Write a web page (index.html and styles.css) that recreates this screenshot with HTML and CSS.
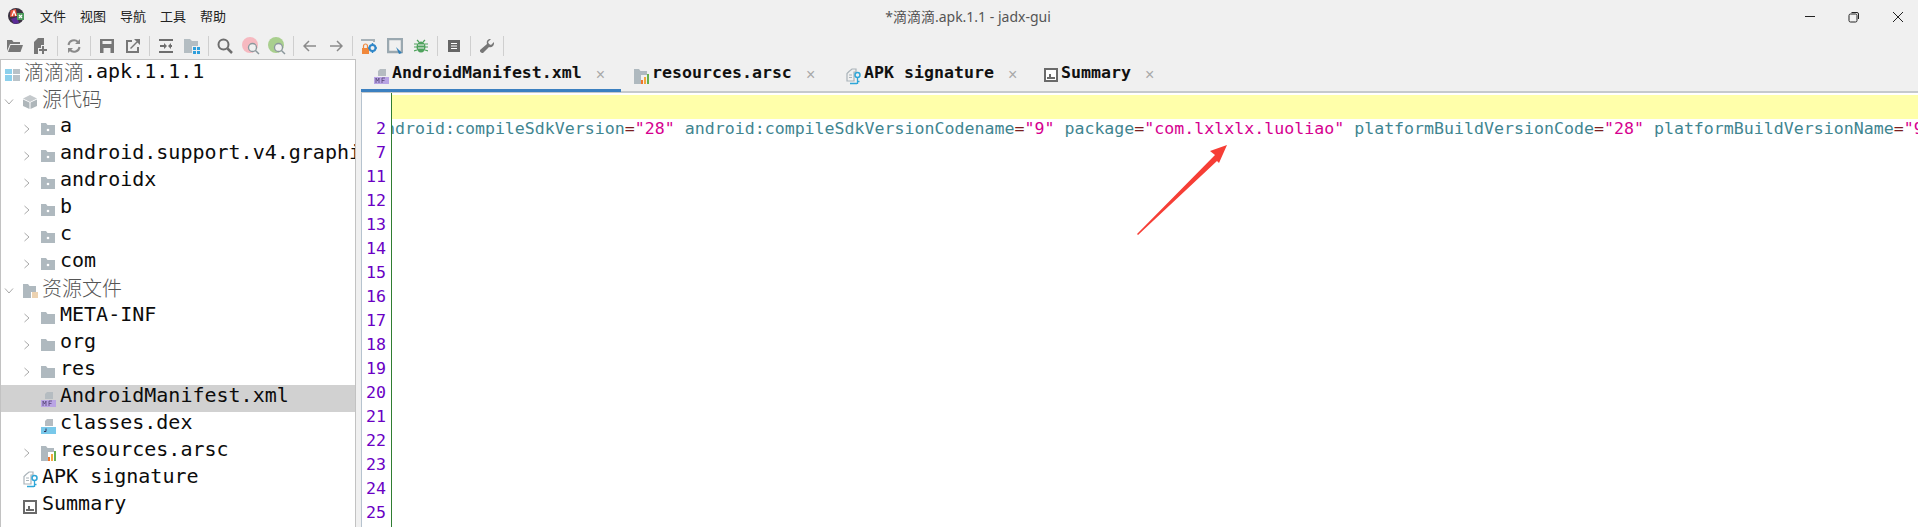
FILE: index.html
```html
<!DOCTYPE html>
<html lang="zh">
<head>
<meta charset="utf-8">
<title>jadx-gui</title>
<link rel="stylesheet" href="styles.css">
</head>
<body>
<svg class="defs" width="0" height="0">
  <symbol id="chev-r" viewBox="0 0 8 10"><path d="M1.5 1l4.500 4-4.500 4" fill="none" stroke="#a9a9a9" stroke-width="1"/></symbol>
  <symbol id="chev-d" viewBox="0 0 10 8"><path d="M1 1.500l4 4.500 4-4.500" fill="none" stroke="#a9a9a9" stroke-width="1"/></symbol>
  <symbol id="pkg" viewBox="0 0 14 12"><path d="M0 0h5l1.500 2H14v10H0z" fill="#afb9bf"/><circle cx="7" cy="7" r="1.300" fill="#fff"/></symbol>
  <symbol id="folder" viewBox="0 0 14 12"><path d="M0 0h5l1.500 2H14v10H0z" fill="#afb9bf"/></symbol>
  <symbol id="file-mf" viewBox="0 0 15 16"><path d="M6 1h6v7H4V3z" fill="#b5bcc1"/><path d="M0 9h15v7H0z" fill="#b9a4e4"/><path d="M2 15v-5l1.500 3 1.500-3v5M8 15v-5h3M8 12.500h2.500" fill="none" stroke="#554477" stroke-width=".8"/></symbol>
  <symbol id="file-dex" viewBox="0 0 15 16"><path d="M6 1h6v7H4V3z" fill="#b5bcc1"/><path d="M0 9h15v7H0z" fill="#78c8ea"/><path d="M5 10.500v3H3" fill="none" stroke="#335" stroke-width="1"/></symbol>
  <symbol id="arsc" viewBox="0 0 15 16"><path d="M0 1h5l1.500 2H13v4H7v9H0z" fill="#afb9bf"/><path d="M7 12h2v4H7z" fill="#f0762c"/><path d="M10 9h2v7h-2z" fill="#f2a83c"/><path d="M13 6h2v10h-2z" fill="#66b04c"/></symbol>
  <symbol id="sig" viewBox="0 0 15 17"><path d="M3 3.500L6 1h4v3H8v9H1V5.500z" fill="none" stroke="#aab3b9" stroke-width="1.200"/><path d="M3 7h3M3 9.500h3" stroke="#aab3b9"/><circle cx="11.500" cy="7" r="2.500" fill="none" stroke="#2fa6d8" stroke-width="1.500"/><path d="M11.500 9.500V16M11.500 13.500h2M4 15.500h7" stroke="#2fa6d8" stroke-width="1.300" fill="none"/></symbol>
  <symbol id="summary" viewBox="0 0 14 14"><path d="M0 0h14v14H0z" fill="#6a6a6a"/><path d="M2 2h10v10H2z" fill="#fff"/><path d="M3 11V9h2V6h2v3h4v2z" fill="#6a6a6a"/></symbol>
</svg>

<header class="titlebar">
  <div class="menubar">
    <svg class="logo" viewBox="0 0 16 16" width="16" height="16"><circle cx="8" cy="8" r="8" fill="#3a3140"/><path d="M2.500 2.500L8 1l1 7-7 1z" fill="#e8543c"/><path d="M3 11l6-2 2 6-5 1z" fill="#5a2b96"/><path d="M9 5h7v7H9z" fill="#4c9a5c"/><path d="M4 8l2-5 2 5M11 7l3 3M14 7l-3 3" fill="none" stroke="#fff" stroke-width="1.200"/></svg>
    <span class="menu">文件</span><span class="menu">视图</span><span class="menu">导航</span><span class="menu">工具</span><span class="menu">帮助</span>
  </div>
  <div class="wintitle">*滴滴滴.apk.1.1 - jadx-gui</div>
  <div class="winctl">
    <svg viewBox="0 0 12 12" width="12" height="12"><path d="M1 5.500h10" stroke="#222" stroke-width="1"/></svg>
    <svg viewBox="0 0 12 12" width="12" height="12"><rect x="1" y="3" width="8" height="8" rx="1.500" fill="none" stroke="#222"/><path d="M3.500 1.500H9a1.500 1.500 0 0 1 1.500 1.500v5" fill="none" stroke="#222"/></svg>
    <svg viewBox="0 0 12 12" width="12" height="12"><path d="M1 1l10 10M11 1L1 11" stroke="#222" stroke-width="1"/></svg>
  </div>
</header>

<nav class="toolbar">
  <span class="tb"><svg viewBox="0 0 16 14" width="16" height="14"><path d="M0 1h5l1.500 2H13v2H3L0 12z" fill="#777"/><path d="M3.500 6H16l-2.500 7H1z" fill="#777"/></svg></span>
  <span class="tb"><svg viewBox="0 0 14 16" width="14" height="16"><path d="M4 0h6v7H7v3H4v6H0V4z" fill="#777"/><path d="M8 8h2v3h3v2h-3v3H8v-3H5v-2h3z" fill="#777"/></svg></span>
  <i class="sep"></i>
  <span class="tb"><svg viewBox="0 0 14 14" width="14" height="14"><path d="M1.500 6A5.500 5.500 0 0 1 11 3M12.500 8A5.500 5.500 0 0 1 3 11" fill="none" stroke="#8a8a8a" stroke-width="2"/><path d="M13 0v5H8zM1 14V9h5z" fill="#8a8a8a"/></svg></span>
  <i class="sep"></i>
  <span class="tb"><svg viewBox="0 0 14 14" width="14" height="14"><path d="M0 0h14v14H0z" fill="#777"/><path d="M2.500 2h9v3h-9zM3.500 9h7v5h-7z" fill="#f0f0f0"/></svg></span>
  <span class="tb"><svg viewBox="0 0 14 14" width="14" height="14"><path d="M6 2H1v11h11V8" fill="none" stroke="#777" stroke-width="2"/><path d="M8 0h6v6zM4 9l7-7 1 1-7 7z" fill="#777"/></svg></span>
  <i class="sep"></i>
  <span class="tb"><svg viewBox="0 0 14 14" width="14" height="14"><path d="M0 1h14M0 13h14" stroke="#6e6e6e" stroke-width="2"/><path d="M1 6h4V4l3 3-3 3V8H1zM13 6h-1V4L9 7l3 3V8h1z" fill="#6e6e6e"/></svg></span>
  <span class="tb"><svg viewBox="0 0 16 16" width="16" height="16"><path d="M0 1h6l2 2h6v5H8v7H0z" fill="#b4bdc2"/><path d="M9 9h3v3H9zM13 9h3v3h-3zM9 13h3v3H9zM13 13h3v3h-3z" fill="#2f9fdc"/></svg></span>
  <i class="sep"></i>
  <span class="tb"><svg viewBox="0 0 16 16" width="16" height="16"><circle cx="6.500" cy="6.500" r="5" fill="none" stroke="#6e6e6e" stroke-width="2"/><path d="M10.500 10.500L15 15" stroke="#6e6e6e" stroke-width="2.500"/></svg></span>
  <span class="tb"><svg viewBox="0 0 18 18" width="18" height="18"><circle cx="8" cy="8" r="8" fill="#f6b9c0"/><circle cx="10.500" cy="10.500" r="4" fill="#f0f0f0" stroke="#8b979c" stroke-width="1.300"/><path d="M13.500 13.500L17 17" stroke="#8b979c" stroke-width="1.500"/></svg></span>
  <span class="tb"><svg viewBox="0 0 18 18" width="18" height="18"><circle cx="8" cy="8" r="8" fill="#a9cf8e"/><circle cx="10.500" cy="10.500" r="4" fill="#f0f0f0" stroke="#8b979c" stroke-width="1.300"/><path d="M13.500 13.500L17 17" stroke="#8b979c" stroke-width="1.500"/></svg></span>
  <i class="sep"></i>
  <span class="tb"><svg viewBox="0 0 14 12" width="14" height="12"><path d="M6 1L1 6l5 5M1 6h12" fill="none" stroke="#8a8a8a" stroke-width="1.500"/></svg></span>
  <span class="tb"><svg viewBox="0 0 14 12" width="14" height="12"><path d="M8 1l5 5-5 5M13 6H1" fill="none" stroke="#8a8a8a" stroke-width="1.500"/></svg></span>
  <i class="sep"></i>
  <span class="tb"><svg viewBox="0 0 16 16" width="16" height="16"><path d="M0 1h14v3h-2V3H0z" fill="#a8b2b8"/><path d="M1 10h7v6H1z" fill="#f0883c"/><path d="M2.500 10V8a2 2 0 0 1 4 0v2" fill="none" stroke="#f0883c" stroke-width="1.200"/><circle cx="11.500" cy="10" r="3" fill="none" stroke="#2f86c8" stroke-width="2"/><path d="M11.500 5v2M11.500 13v2M7 10h1M15 10h1" stroke="#2f86c8" stroke-width="1.500"/></svg></span>
  <span class="tb"><svg viewBox="0 0 16 16" width="16" height="16"><path d="M1 1h14v13H1z" fill="none" stroke="#9aa8b0" stroke-width="2.500"/><path d="M9 9l6 6-3 1z" fill="#2f7fb8"/></svg></span>
  <span class="tb"><svg viewBox="0 0 14 14" width="14" height="14"><ellipse cx="7" cy="8" rx="4.500" ry="5.500" fill="#4ea25c"/><path d="M3 1l2 2M11 1L9 3M0 5h3M11 5h3M0 8h3M11 8h3M0 12l3-1M14 12l-3-1" stroke="#4ea25c" stroke-width="1.200"/><path d="M4 6h6M4 9h6" stroke="#f0f0f0" stroke-width="1"/></svg></span>
  <i class="sep"></i>
  <span class="tb"><svg viewBox="0 0 12 12" width="12" height="12"><path d="M0 0h12v12H0z" fill="#666"/><path d="M3 3.500h6M3 6h6M3 8.500h6" stroke="#fff" stroke-width="1"/></svg></span>
  <i class="sep"></i>
  <span class="tb"><svg viewBox="0 0 14 14" width="14" height="14"><path d="M14 3l-3 3-2-1-1-2 3-3c-3-.5-5 2-4 5L0 11c-.5 1.500 1 3 3 3l6-6c3 1 5.500-1.500 5-5z" fill="#777"/></svg></span>
  <i class="sep"></i>
</nav>

<main class="workspace">
  <aside class="tree">
    <div class="row"><span class="ic root"><svg viewBox="0 0 15 12" width="15" height="12"><path d="M0 0h7v5H0zM0 6h7v6H0z" fill="#8cd0ec"/><path d="M8 0h7v5H8zM8 6h7v6H8z" fill="#b9c2c8"/></svg></span><span class="cjk">滴滴滴</span><span class="lbl">.apk.1.1.1</span></div>
    <div class="row"><span class="cv"><svg width="10" height="8"><use href="#chev-d"/></svg></span><span class="ic"><svg viewBox="0 0 14 14" width="14" height="14"><path d="M7 0l7 3.500-7 3.500L0 3.500z" fill="#c4c9cc"/><path d="M0 4.500l6.500 3V14L0 11zM14 4.500l-6.500 3V14L14 11z" fill="#aeb6ba"/></svg></span><span class="cjk">源代码</span></div>
    <div class="row l2"><span class="cv"><svg width="8" height="10"><use href="#chev-r"/></svg></span><span class="ic"><svg width="14" height="12"><use href="#pkg"/></svg></span><span class="lbl">a</span></div>
    <div class="row l2"><span class="cv"><svg width="8" height="10"><use href="#chev-r"/></svg></span><span class="ic"><svg width="14" height="12"><use href="#pkg"/></svg></span><span class="lbl">android.support.v4.graphics</span></div>
    <div class="row l2"><span class="cv"><svg width="8" height="10"><use href="#chev-r"/></svg></span><span class="ic"><svg width="14" height="12"><use href="#pkg"/></svg></span><span class="lbl">androidx</span></div>
    <div class="row l2"><span class="cv"><svg width="8" height="10"><use href="#chev-r"/></svg></span><span class="ic"><svg width="14" height="12"><use href="#pkg"/></svg></span><span class="lbl">b</span></div>
    <div class="row l2"><span class="cv"><svg width="8" height="10"><use href="#chev-r"/></svg></span><span class="ic"><svg width="14" height="12"><use href="#pkg"/></svg></span><span class="lbl">c</span></div>
    <div class="row l2"><span class="cv"><svg width="8" height="10"><use href="#chev-r"/></svg></span><span class="ic"><svg width="14" height="12"><use href="#pkg"/></svg></span><span class="lbl">com</span></div>
    <div class="row"><span class="cv"><svg width="10" height="8"><use href="#chev-d"/></svg></span><span class="ic"><svg viewBox="0 0 15 16" width="15" height="16"><path d="M0 1h5l1.500 2H13v6H8v6H0z" fill="#afb9bf"/><path d="M9 10h6M9 12h6M9 14h6" stroke="#d9a562" stroke-width="1"/></svg></span><span class="cjk">资源文件</span></div>
    <div class="row l2"><span class="cv"><svg width="8" height="10"><use href="#chev-r"/></svg></span><span class="ic"><svg width="14" height="12"><use href="#folder"/></svg></span><span class="lbl">META-INF</span></div>
    <div class="row l2"><span class="cv"><svg width="8" height="10"><use href="#chev-r"/></svg></span><span class="ic"><svg width="14" height="12"><use href="#folder"/></svg></span><span class="lbl">org</span></div>
    <div class="row l2"><span class="cv"><svg width="8" height="10"><use href="#chev-r"/></svg></span><span class="ic"><svg width="14" height="12"><use href="#folder"/></svg></span><span class="lbl">res</span></div>
    <div class="row l2 selected"><span class="cv"></span><span class="ic"><svg width="15" height="16"><use href="#file-mf"/></svg></span><span class="lbl">AndroidManifest.xml</span></div>
    <div class="row l2"><span class="cv"></span><span class="ic"><svg width="15" height="16"><use href="#file-dex"/></svg></span><span class="lbl">classes.dex</span></div>
    <div class="row l2"><span class="cv"><svg width="8" height="10"><use href="#chev-r"/></svg></span><span class="ic"><svg width="15" height="16"><use href="#arsc"/></svg></span><span class="lbl">resources.arsc</span></div>
    <div class="row"><span class="cv"></span><span class="ic"><svg width="15" height="17"><use href="#sig"/></svg></span><span class="lbl">APK signature</span></div>
    <div class="row"><span class="cv"></span><span class="ic"><svg width="14" height="14"><use href="#summary"/></svg></span><span class="lbl">Summary</span></div>
  </aside>

  <section class="pane">
    <div class="tabs">
      <div class="tab active"><svg width="15" height="16"><use href="#file-mf"/></svg><b>AndroidManifest.xml</b><em>×</em></div>
      <div class="tab"><svg width="15" height="16"><use href="#arsc"/></svg><b>resources.arsc</b><em>×</em></div>
      <div class="tab"><svg width="15" height="17"><use href="#sig"/></svg><b>APK signature</b><em>×</em></div>
      <div class="tab"><svg width="14" height="14"><use href="#summary"/></svg><b>Summary</b><em>×</em></div>
    </div>
    <div class="editor">
      <div class="gutter">
        <span></span><span>2</span><span>7</span><span>11</span><span>12</span><span>13</span><span>14</span><span>15</span><span>16</span><span>17</span><span>18</span><span>19</span><span>20</span><span>21</span><span>22</span><span>23</span><span>24</span><span>25</span>
      </div>
      <div class="code">
        <div class="caret-line"></div>
        <div class="line"><span class="scrolled"><span class="a">android:compileSdkVersion</span><span class="e">=</span><span class="s">"28"</span> <span class="a">android:compileSdkVersionCodename</span><span class="e">=</span><span class="s">"9"</span> <span class="a">package</span><span class="e">=</span><span class="s">"com.lxlxlx.luoliao"</span> <span class="a">platformBuildVersionCode</span><span class="e">=</span><span class="s">"28"</span> <span class="a">platformBuildVersionName</span><span class="e">=</span><span class="s">"9"</span></span></div>
      </div>
    </div>
  </section>
</main>

<svg class="arrow" viewBox="0 0 92 94" width="92" height="94"><path d="M91 1L74 7l5 4L1 90 2 91 81 17l2 2z" fill="#f63e36"/></svg>
</body>
</html>
```
FILE: styles.css
```css
* { box-sizing: border-box; }
html, body { margin: 0; height: 100%; }
body {
  width: 1918px;
  height: 527px;
  overflow: hidden;
  background: #f0f0f0;
  position: relative;
  display: flex;
  flex-direction: column;
  font-family: "DejaVu Sans Mono", "Noto Sans CJK SC", monospace;
  color: #111;
}
.defs { position: absolute; }

.titlebar {
  height: 31px;
  margin-bottom: 1px;
  display: grid;
  grid-template-columns: 1fr auto 1fr;
  align-items: center;
  flex: none;
}
.menubar { display: flex; align-items: center; padding-left: 8px; }
.logo { margin-right: 16px; }
.menu {
  width: 40px;
  font: 13px "Noto Sans CJK SC", sans-serif;
  color: #222;
}
.wintitle {
  padding-left: 18px;
  font: 14px "Noto Sans", "Noto Sans CJK SC", sans-serif;
  color: #555;
}
.winctl {
  display: flex;
  justify-content: flex-end;
  gap: 32px;
  padding-right: 14px;
  margin-top: 2px;
}

.toolbar {
  height: 27px;
  flex: none;
  display: flex;
  align-items: center;
  padding-left: 2px;
}
.tb {
  width: 26px;
  height: 24px;
  display: flex;
  align-items: center;
  justify-content: center;
}
.sep {
  width: 1px;
  height: 20px;
  margin: 0 3px;
  background: #cfcfcf;
}

.workspace { flex: 1; display: flex; min-height: 0; }

.tree {
  width: 356px;
  flex: none;
  padding-top: 1px;
  background: #fff;
  border: 1px solid #c2c2c2;
  border-bottom: 0;
  overflow: hidden;
}
.row {
  height: 27px;
  margin-left: -1px;
  margin-right: -1px;
  display: flex;
  align-items: center;
  white-space: nowrap;
  font-size: 20px;
  line-height: 27px;
}
.row.l2 { padding-left: 18px; }
.row.selected { background: #d1d1d1; }
.cv { width: 18px; flex: none; display: flex; justify-content: center; align-items: center; }
.ic { width: 25px; flex: none; padding-left: 5px; display: flex; align-items: center; margin-right: -1px; }
.lbl { position: relative; top: -3px; color: #0c0c0c; }
.cjk {
  position: relative;
  top: -3px;
  font-family: "Noto Sans CJK SC", sans-serif;
  font-weight: 300;
  font-size: 20px;
  color: #555;
}

.pane { flex: 1; margin-left: 5px; min-width: 0; display: flex; flex-direction: column; }
.tabs {
  height: 34px;
  flex: none;
  display: flex;
  align-items: flex-start;
  border-bottom: 2px solid #c5c9cc;
}
.tab {
  height: 33px;
  padding: 4px 0 0 13px;
  display: flex;
  align-items: flex-start;
  flex: none;
}
.tab.active { border-bottom: 3px solid #3c80c0; }
.tab svg { margin-top: 5px; }
.tab:nth-child(1) { width: 260px; }
.tab:nth-child(2) { width: 212px; }
.tab:nth-child(3) { width: 198px; }
.tab b {
  margin-left: 3px;
  font-size: 16.600px;
  line-height: 20px;
  font-weight: 700;
  color: #111;
}
.tab em {
  margin-left: 14px;
  margin-top: 2px;
  font: normal 16px/20px "Liberation Sans", sans-serif;
  color: #a8a8a8;
}

.editor {
  flex: 1;
  min-height: 0;
  display: flex;
  background: #fff;
  border-left: 1px solid #b6c3cf;
  font-size: 16.600px;
}
.gutter {
  width: 30px;
  flex: none;
  padding-top: 2px;
  padding-right: 5px;
  border-right: 1px solid #2f7d32;
  text-align: right;
  color: #6a00c4;
}
.gutter span { display: block; height: 24px; line-height: 20px; }
.code { flex: 1; min-width: 0; overflow: hidden; padding-top: 2px; }
.caret-line { height: 24px; background: #ffffaa; }
.line { height: 24px; line-height: 20px; white-space: pre; }
.scrolled { margin-left: -17px; }
.a { color: #3f8590; }
.e { color: #7a1f1f; }
.s { color: #d6008f; }

.arrow { position: absolute; left: 1136px; top: 144px; }
```
